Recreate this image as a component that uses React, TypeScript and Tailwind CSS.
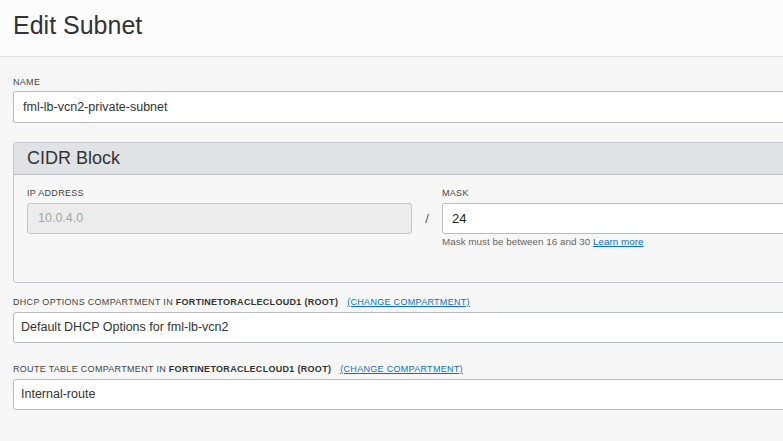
import React from "react";

const font = { fontFamily: '"Liberation Sans", Arial, sans-serif' };

function Label({ children }: { children: React.ReactNode }) {
  return (
    <div className="text-[9px] leading-[11px] text-[#444] uppercase tracking-[0.3px]">
      {children}
    </div>
  );
}

export default function App() {
  return (
    <div className="w-full h-[441px] overflow-hidden bg-[#f7f7f7]" style={font}>
      <div className="w-[854px]">
        <div className="h-[57px] bg-[#fcfcfc] border-b border-[#e4e4e4] pl-[13px] pt-[10px]">
          <h1 className="text-[25px] leading-[30px] text-[#333]">Edit Subnet</h1>
        </div>
        <div className="px-[13px] pt-[20px]">
          <Label>Name</Label>
          <div className="mt-[3px] h-[32px] bg-white border border-[#b8bcc2] rounded-[3px] flex items-center pl-[9px] text-[12.5px] text-[#333]">
            fml-lb-vcn2-private-subnet
          </div>

          <div className="mt-[19px] h-[141px] border border-[#c3c7cc] rounded-[3px] bg-[#f7f7f7]">
            <div className="h-[32px] bg-[#dfe3e6] border-b border-[#bfc4c9] pl-[13px] flex items-center text-[18px] text-[#333]">
              CIDR Block
            </div>
            <div className="flex px-[13px] pt-[13px]">
              <div className="w-[385px]">
                <Label>IP Address</Label>
                <div className="mt-[4px] h-[31px] bg-[#ececec] border border-[#c4c7cb] rounded-[3px] flex items-center pl-[10px] text-[12.5px] text-[#a5a5a5]">
                  10.0.4.0
                </div>
              </div>
              <div className="w-[30px] pt-[15px] flex items-center justify-center h-[46px] text-[13px] text-[#555]">
                /
              </div>
              <div className="w-[385px]">
                <Label>Mask</Label>
                <div className="mt-[4px] h-[31px] bg-white border border-[#b8bcc2] rounded-[3px] flex items-center pl-[9px] text-[13px] text-[#222]">
                  24
                </div>
                <div className="mt-[2px] text-[9.9px] leading-[12px] text-[#666]">
                  Mask must be between 16 and 30{" "}
                  <a className="text-[#0572ce] underline">Learn more</a>
                </div>
              </div>
            </div>
          </div>

          <div className="mt-[14px]">
            <Label>
              DHCP Options Compartment in{" "}
              <span className="font-bold text-[#333]">fortinetoraclecloud1 (root)</span>
              <a className="ml-[9px] text-[#0572ce] underline">(Change Compartment)</a>
            </Label>
          </div>
          <div className="mt-[4px] h-[31px] bg-white border border-[#b8bcc2] rounded-[3px] flex items-center pl-[7px] text-[12.5px] text-[#333]">
            Default DHCP Options for fml-lb-vcn2
          </div>

          <div className="mt-[21px]">
            <Label>
              Route Table Compartment in{" "}
              <span className="font-bold text-[#333]">fortinetoraclecloud1 (root)</span>
              <a className="ml-[9px] text-[#0572ce] underline">(Change Compartment)</a>
            </Label>
          </div>
          <div className="mt-[4px] h-[31px] bg-white border border-[#b8bcc2] rounded-[3px] flex items-center pl-[7px] text-[12.5px] text-[#333]">
            Internal-route
          </div>
        </div>
      </div>
    </div>
  );
}
